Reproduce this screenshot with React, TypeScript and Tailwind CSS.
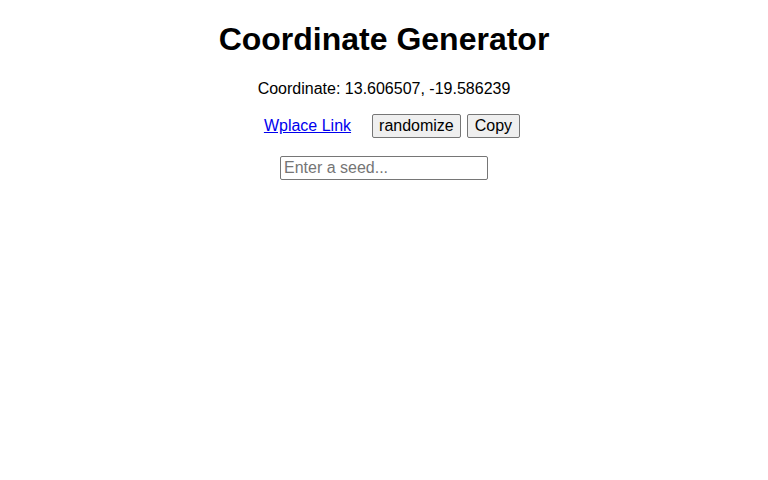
export default function App() {
  const lat = "13.606507";
  const lng = "-19.586239";

  return (
    <div className="min-h-[480px] bg-white text-black font-['Liberation_Sans',Arial,sans-serif] text-center">
      <h1 className="pt-[21px] text-[32px] leading-[37px] font-bold">Coordinate Generator</h1>

      <p className="mt-[22px] text-[16px] leading-[18px]">
        Coordinate: {lat}, {lng}
      </p>

      {/* links + buttons */}
      <div className="mt-[16px] flex justify-center items-center pl-[16px] h-[24px]">
        <a href="#" className="text-[16px] leading-[18px] text-[#0000ee] underline">
          Wplace Link
        </a>
        <button className="ml-[21px] h-[24px] px-[6px] text-[16px] leading-[18px] bg-[#efefef] border border-[#767676] rounded-[2px]">
          randomize
        </button>
        <button className="ml-[6px] h-[24px] px-[7px] text-[16px] leading-[18px] bg-[#efefef] border border-[#767676] rounded-[2px]">
          Copy
        </button>
      </div>

      <div className="mt-[18px] flex justify-center">
        <input
          type="text"
          placeholder="Enter a seed..."
          className="w-[208px] h-[24px] px-[3px] text-[16px] leading-[18px] border border-[#767676] rounded-[2px] placeholder:text-[#757575] outline-none"
        />
      </div>
    </div>
  );
}
